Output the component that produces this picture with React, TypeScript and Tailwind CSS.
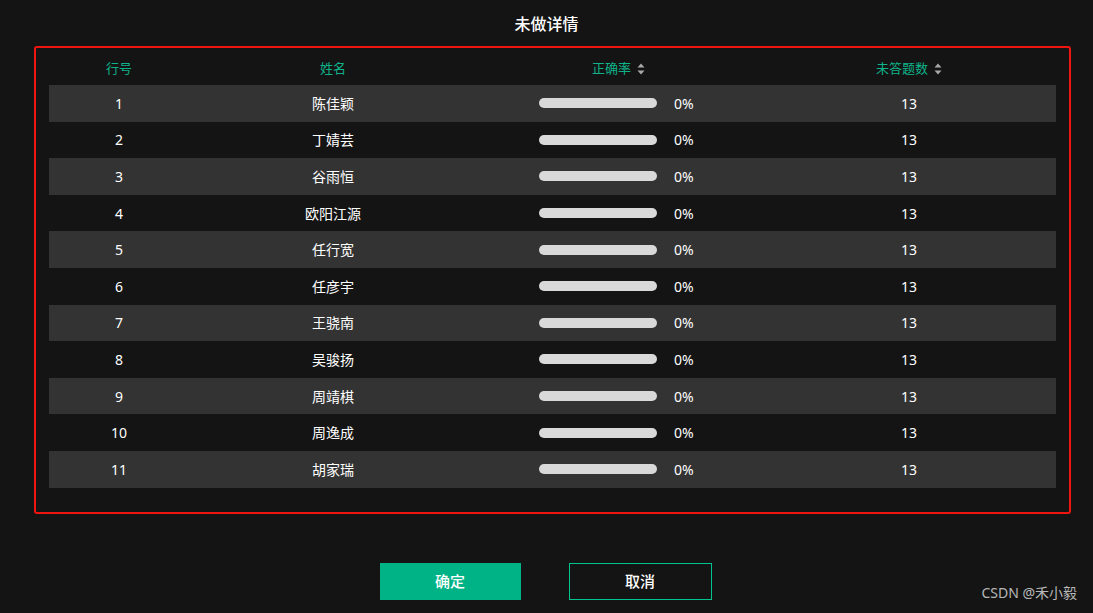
import React from "react";

const ROWS = [
  "陈佳颖",
  "丁婧芸",
  "谷雨恒",
  "欧阳江源",
  "任行宽",
  "任彦宇",
  "王骁南",
  "吴骏扬",
  "周靖棋",
  "周逸成",
  "胡家瑞",
];

function SortIcon() {
  return (
    <svg width="8" height="12" viewBox="0 0 8 12" className="ml-[6px] inline-block">
      <path d="M4 0.5 L7.5 4.5 L0.5 4.5 Z" fill="#a8a8a8" />
      <path d="M4 11.5 L7.5 7.5 L0.5 7.5 Z" fill="#a8a8a8" />
    </svg>
  );
}

export default function App() {
  return (
    <div
      className="flex h-[613px] w-[1093px] flex-col items-center bg-[#141414] text-white"
      style={{ fontFamily: '"Noto Sans", "Noto Sans CJK SC", sans-serif' }}
    >
      <h2 className="mt-[12px] h-[24px] text-[16px] leading-[24px] font-medium">未做详情</h2>

      <div className="mt-[10px] ml-[12px] w-[1037px] rounded-[3px] border-[2px] border-[#f0160f] px-[13px] pt-[4px] pb-[24px]">
        <div className="flex h-[33px] items-center text-[13px] text-[#0fb38a]">
          <div className="w-[140px] text-center">行号</div>
          <div className="w-[288px] text-center">姓名</div>
          <div className="flex w-[283px] items-center justify-center">
            正确率
            <SortIcon />
          </div>
          <div className="flex w-[294px] items-center justify-center pl-[4px]">
            未答题数
            <SortIcon />
          </div>
        </div>

        <div className="flex flex-col">
          {ROWS.map((name, i) => (
            <div
              key={name}
              className={`flex h-[36.6px] items-center text-[14px] ${i % 2 === 0 ? "bg-[#333333]" : ""}`}
            >
              <div className="w-[140px] text-center">{i + 1}</div>
              <div className="w-[288px] text-center">{name}</div>
              <div className="flex w-[283px] items-center justify-center">
                <div className="h-[10px] w-[118px] rounded-full bg-[#d9d9d9]" />
                <span className="ml-[17px] w-[24px]">0%</span>
              </div>
              <div className="w-[294px] pl-[4px] text-center">13</div>
            </div>
          ))}
        </div>
      </div>

      <div className="mt-[49px] flex gap-[48px] pr-[2px]">
        <button className="h-[37px] w-[141px] bg-[#00b386] text-[15px] font-medium text-white">确定</button>
        <button className="h-[37px] w-[143px] border-[1px] border-solid border-[#00c490] text-[15px] font-medium text-white">
          取消
        </button>
      </div>

      <div className="mt-[-18px] w-full pr-[16px] text-right text-[14px] text-[#b8b8b8]">CSDN @禾小毅</div>
    </div>
  );
}
